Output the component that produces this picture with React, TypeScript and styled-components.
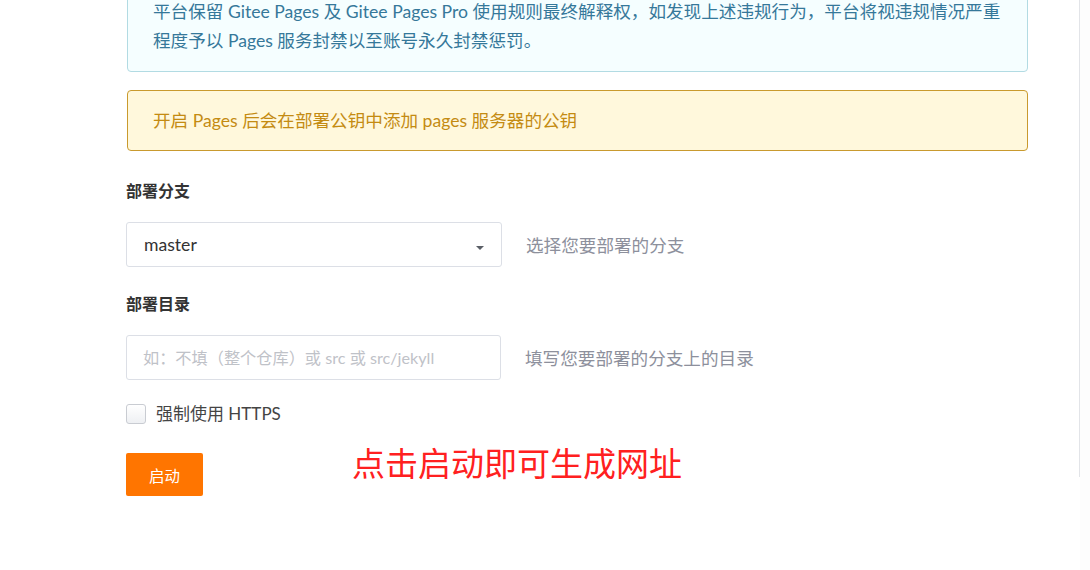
import React from "react";
import styled, { createGlobalStyle } from "styled-components";

const Global = createGlobalStyle`
  html, body { margin: 0; padding: 0; background: #ffffff; }
  body {
    font-family: Lato, "Noto Sans CJK SC", sans-serif;
    color: #333;
    overflow: hidden;
  }
`;

const Page = styled.div`
  display: flex;
  width: 1090px;
  height: 570px;
  overflow: hidden;
`;

const Main = styled.div`
  flex: 1;
  padding-left: 126px;
  padding-right: 51px;
`;

const Divider = styled.div`
  width: 1px;
  height: 477px;
  background: #e2e4e8;
`;

const Side = styled.div`
  width: 10px;
  background: #fdfdfd;
`;

const Notice = styled.div<{ $tone: "info" | "warn" }>`
  margin-left: 1px;
  border-radius: 4px;
  border: 1px solid ${(p) => (p.$tone === "info" ? "#b2dbe3" : "#c99a2e")};
  background: ${(p) => (p.$tone === "info" ? "#f5feff" : "#fff8dc")};
  color: ${(p) => (p.$tone === "info" ? "#35789a" : "#c48b12")};
  font-size: 17.6px;
  line-height: 29px;
  padding: ${(p) => (p.$tone === "info" ? "16px 25px 16px" : "15px 25px 15px")};
  margin-top: ${(p) => (p.$tone === "info" ? "-20px" : "18px")};
  white-space: nowrap;
`;

const Label = styled.div`
  font-size: 16px;
  font-weight: 700;
  color: #333;
  line-height: 30px;
`;

const BranchLabel = styled(Label)`
  margin-top: 25px;
`;

const DirLabel = styled(Label)`
  margin-top: 22px;
`;

const FieldRow = styled.div`
  display: flex;
  align-items: center;
  gap: 24px;
  margin-top: 16px;
`;

const Select = styled.div`
  position: relative;
  box-sizing: border-box;
  width: 376px;
  height: 45px;
  border: 1px solid #dcdfe6;
  border-radius: 3px;
  display: flex;
  align-items: center;
  padding-left: 17px;
  font-size: 17.6px;
  color: #333;
`;

const Caret = styled.span`
  position: absolute;
  right: 17px;
  top: 23px;
  width: 0;
  height: 0;
  border-left: 4px solid transparent;
  border-right: 4px solid transparent;
  border-top: 4px solid #5a5e66;
`;

const Input = styled.input`
  box-sizing: border-box;
  width: 375px;
  height: 45px;
  border: 1px solid #dcdfe6;
  border-radius: 3px;
  padding: 0 16px;
  font-family: Lato, "Noto Sans CJK SC", sans-serif;
  font-size: 16.2px;
  outline: none;
  &::placeholder { color: #bfc2c8; }
`;

const Help = styled.span`
  font-size: 17.6px;
  color: #8d909c;
`;

const CheckRow = styled.label`
  display: flex;
  align-items: center;
  gap: 10px;
  height: 20px;
  line-height: 20px;
  margin-top: 24px;
  font-size: 17px;
  color: #444;
`;

const Box = styled.span`
  box-sizing: border-box;
  width: 20px;
  height: 20px;
  border: 1px solid #c9ccd2;
  border-radius: 3px;
  background: linear-gradient(#ffffff, #eef0f3);
`;

const ActionRow = styled.div`
  display: flex;
  align-items: flex-start;
  margin-top: 29px;
`;

const Start = styled.button`
  width: 77px;
  height: 43px;
  border: none;
  border-radius: 2px;
  background: #ff7500;
  color: #fff;
  font-family: Lato, "Noto Sans CJK SC", sans-serif;
  font-size: 15.5px;
  cursor: pointer;
`;

const Annotation = styled.span`
  margin-left: 149px;
  margin-top: -11px;
  font-family: "Noto Sans CJK SC", sans-serif;
  font-size: 33px;
  line-height: 40px;
  color: #ff2020;
`;

export default function App() {
  return (
    <>
      <Global />
      <Page>
        <Main>
          <Notice $tone="info">
            平台保留 Gitee Pages 及 Gitee Pages Pro 使用规则最终解释权，如发现上述违规行为，平台将视违规情况严重
            <br />
            程度予以 Pages 服务封禁以至账号永久封禁惩罚。
          </Notice>
          <Notice $tone="warn">开启 Pages 后会在部署公钥中添加 pages 服务器的公钥</Notice>
          <BranchLabel>部署分支</BranchLabel>
          <FieldRow>
            <Select>
              master
              <Caret />
            </Select>
            <Help>选择您要部署的分支</Help>
          </FieldRow>
          <DirLabel>部署目录</DirLabel>
          <FieldRow>
            <Input placeholder="如：不填（整个仓库）或 src 或 src/jekyll" />
            <Help>填写您要部署的分支上的目录</Help>
          </FieldRow>
          <CheckRow>
            <Box />
            强制使用 HTTPS
          </CheckRow>
          <ActionRow>
            <Start>启动</Start>
            <Annotation>点击启动即可生成网址</Annotation>
          </ActionRow>
        </Main>
        <Divider />
        <Side />
      </Page>
    </>
  );
}
